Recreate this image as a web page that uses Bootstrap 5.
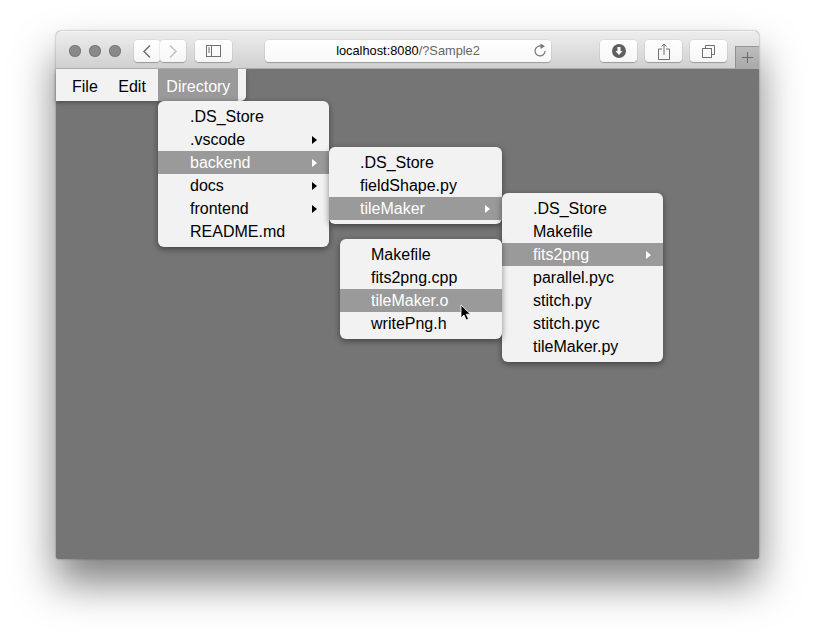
<!DOCTYPE html>
<html lang="en">
<head>
<meta charset="utf-8">
<title>Sample2</title>
<link rel="stylesheet" href="https://cdn.jsdelivr.net/npm/bootstrap@5.3.0/dist/css/bootstrap.min.css">
<style>
html,body{height:100%;background:#fff;overflow:hidden;font-family:"Liberation Sans",Arial,sans-serif;}
.app-window{width:703px;height:528px;margin:31px 0 0 56px;border-radius:5px 5px 3px 3px;background:#757575;position:relative;box-shadow:0 24px 42px rgba(0,0,0,.5),0 0 2px rgba(0,0,0,.45);}
.tool-bar{height:38px;border-radius:5px 5px 0 0;background:linear-gradient(#ededed,#d0d0d0);border-top:1px solid #f4f4f4;border-bottom:1px solid #ababab;position:relative;padding:8px 0 0 13px;}
.dot{width:12px;height:12px;border-radius:50%;background:#8a8a8a;box-shadow:inset 0 0 0 1px #7b7b7b;margin:5px 8px 0 0;}
.dot-last{margin-right:13px;}
.t-btn{height:22px;background:linear-gradient(#fff,#f6f6f6);border-radius:4px;box-shadow:0 1px 1px rgba(0,0,0,.25),0 0 0 .5px rgba(0,0,0,.08);display:flex;align-items:center;justify-content:center;}
.t-nav{width:26px;}
.t-wide{width:37px;}
.t-gap{margin-left:8px;}
.t-side{margin-left:9px;}
.url-bar{width:286px;height:22px;margin-left:33px;margin-right:49px;background:linear-gradient(#fff,#f8f8f8);border-radius:4px;box-shadow:0 1px 1px rgba(0,0,0,.25),0 0 0 .5px rgba(0,0,0,.08);position:relative;font-size:12.8px;line-height:22px;text-align:center;color:#000;}
.url-bar span{color:#666;}
.url-bar svg{position:absolute;right:4px;top:3px;}
.new-tab{position:absolute;right:0;bottom:0;width:24px;height:22px;background:linear-gradient(#bdbdbd,#a9a9a9);border-left:1px solid #8f8f8f;border-top:1px solid #999;display:flex;align-items:center;justify-content:center;}
.menu-bar{width:190px;height:32px;background:#f2f2f2;border-radius:0 0 5px 0;box-shadow:0 2px 4px rgba(0,0,0,.3);font-size:16px;display:flex;align-items:stretch;}
.menu-bar .bar-item{line-height:35px;color:#000;padding:0 12.500px 0 8px;}
.menu-bar .bar-item:first-child{padding-left:16px;}
.menu-bar .bar-open{background:#9a9a9a;color:#fff;width:80px;padding:0 8px;}
.dropdown-menu.pop{display:block;position:absolute;margin:0;padding:4px 0;min-width:0;border:0;border-radius:6px;background:#f2f2f2;font-size:16px;box-shadow:0 2px 6px rgba(0,0,0,.45);}
.pop .dropdown-item{height:23px;line-height:23px;padding:0 0 0 31px;color:#000;position:relative;font-family:inherit;}
.pop .dropdown-item.hi{background:#9a9a9a;color:#fff;}
.pop .dropdown-item.sub::after{content:"";position:absolute;right:12px;top:7.500px;border-left:5px solid currentColor;border-top:4.500px solid transparent;border-bottom:4.500px solid transparent;}
.pop-a{left:102px;top:70px;width:171px;}
.pop-a .dropdown-item{padding-left:32px;}
.pop-b{left:273px;top:116px;width:173px;}
.pop-c{left:446px;top:162px;width:161px;}
.pop-d{left:284px;top:208px;width:162px;}
.arrow-cursor{position:absolute;left:404px;top:273px;z-index:1001;}
</style>
</head>
<body>
<div class="app-window">
  <div class="tool-bar d-flex align-items-start">
    <div class="dot"></div><div class="dot"></div><div class="dot dot-last"></div>
    <div class="t-btn t-nav"><svg width="10" height="15" viewBox="0 0 10 15"><path d="M8 1.500 2 7.500l6 6" fill="none" stroke="#707070" stroke-width="1.500"/></svg></div>
    <div class="t-btn t-nav"><svg width="10" height="15" viewBox="0 0 10 15"><path d="M2 1.500l6 6-6 6" fill="none" stroke="#c0c0c0" stroke-width="1.500"/></svg></div>
    <div class="t-btn t-wide t-side"><svg width="16" height="12" viewBox="0 0 16 12"><rect x=".5" y=".5" width="14" height="11" fill="none" stroke="#6f6f6f"/><path d="M5.500 .5v11M2 3h2M2 5h2M2 7h2" stroke="#6f6f6f" fill="none"/></svg></div>
    <div class="url-bar">localhost:8080<span>/?Sample2</span><svg width="14" height="15" viewBox="0 0 14 15"><path d="M8.500 3.200A5 5 0 1 0 12 8" fill="none" stroke="#777" stroke-width="1.200"/><path d="M7.500 .5 12 3.200 7.500 6z" fill="#777"/></svg></div>
    <div class="t-btn t-wide"><svg width="14" height="14" viewBox="0 0 14 14"><circle cx="7" cy="7" r="7" fill="#5f5f5f"/><path d="M5.500 3h3v4h2L7 11 3.500 7h2z" fill="#fff"/></svg></div>
    <div class="t-btn t-wide t-gap"><svg width="12" height="17" viewBox="0 0 12 17"><path d="M4 6H.5v10.500h11V6H8M6 12V1M3.500 3.500 6 1l2.500 2.500" fill="none" stroke="#6f6f6f"/></svg></div>
    <div class="t-btn t-wide t-gap"><svg width="13" height="13" viewBox="0 0 13 13"><rect x=".5" y="3.500" width="9" height="9" fill="none" stroke="#6f6f6f"/><path d="M3.500 3.500v-3h9v9h-3" fill="none" stroke="#6f6f6f"/></svg></div>
    <div class="new-tab"><svg width="13" height="13" viewBox="0 0 13 13"><path d="M6.500 1v11M1 6.500h11" stroke="#6a6a6a"/></svg></div>
  </div>
  <nav class="menu-bar">
    <div class="bar-item">File</div>
    <div class="bar-item">Edit</div>
    <div class="bar-item bar-open">Directory</div>
  </nav>
  <div class="dropdown-menu pop pop-a">
    <div class="dropdown-item">.DS_Store</div>
    <div class="dropdown-item sub">.vscode</div>
    <div class="dropdown-item sub hi">backend</div>
    <div class="dropdown-item sub">docs</div>
    <div class="dropdown-item sub">frontend</div>
    <div class="dropdown-item">README.md</div>
  </div>
  <div class="dropdown-menu pop pop-b">
    <div class="dropdown-item">.DS_Store</div>
    <div class="dropdown-item">fieldShape.py</div>
    <div class="dropdown-item sub hi">tileMaker</div>
  </div>
  <div class="dropdown-menu pop pop-c">
    <div class="dropdown-item">.DS_Store</div>
    <div class="dropdown-item">Makefile</div>
    <div class="dropdown-item sub hi">fits2png</div>
    <div class="dropdown-item">parallel.pyc</div>
    <div class="dropdown-item">stitch.py</div>
    <div class="dropdown-item">stitch.pyc</div>
    <div class="dropdown-item">tileMaker.py</div>
  </div>
  <div class="dropdown-menu pop pop-d">
    <div class="dropdown-item">Makefile</div>
    <div class="dropdown-item">fits2png.cpp</div>
    <div class="dropdown-item hi">tileMaker.o</div>
    <div class="dropdown-item">writePng.h</div>
  </div>
  <svg class="arrow-cursor" width="12" height="18" viewBox="0 0 12 18"><path d="M1 1v13l3-3 2.200 5 2.300-1-2.200-4.800H10.500z" fill="#000" stroke="#fff" stroke-width=".8"/></svg>
</div>
<script src="https://cdn.jsdelivr.net/npm/bootstrap@5.3.0/dist/js/bootstrap.bundle.min.js"></script>
</body>
</html>
